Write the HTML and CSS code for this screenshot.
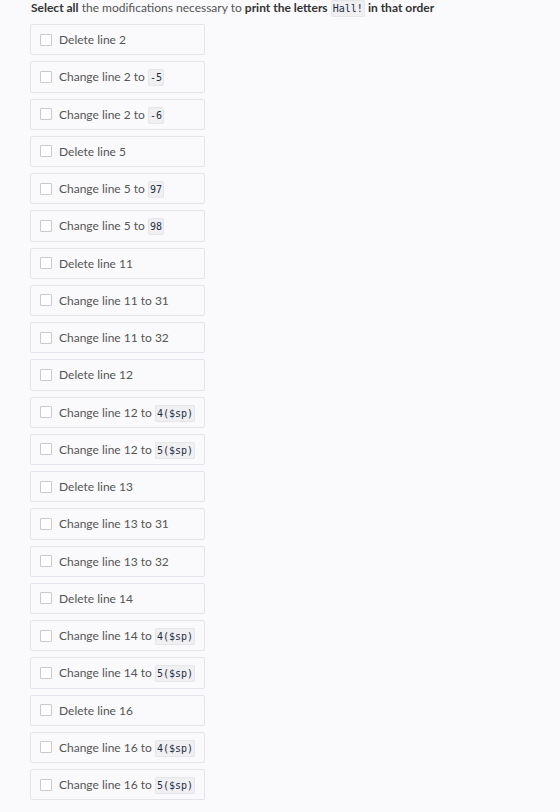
FILE: index.html
```html
<!DOCTYPE html>
<html>
<head>
<meta charset="utf-8">
<link rel="stylesheet" href="styles.css">
</head>
<body>
<div class="page">
  <p class="prompt"><b>Select all</b> the modifications necessary to <b>print the letters</b> <code>Hall!</code> <b>in that order</b></p>
  <ul class="options">
    <li class="option"><span class="check"></span><span class="label">Delete line 2</span></li>
    <li class="option"><span class="check"></span><span class="label">Change line 2 to <code>-5</code></span></li>
    <li class="option"><span class="check"></span><span class="label">Change line 2 to <code>-6</code></span></li>
    <li class="option"><span class="check"></span><span class="label">Delete line 5</span></li>
    <li class="option"><span class="check"></span><span class="label">Change line 5 to <code>97</code></span></li>
    <li class="option"><span class="check"></span><span class="label">Change line 5 to <code>98</code></span></li>
    <li class="option"><span class="check"></span><span class="label">Delete line 11</span></li>
    <li class="option"><span class="check"></span><span class="label">Change line 11 to 31</span></li>
    <li class="option"><span class="check"></span><span class="label">Change line 11 to 32</span></li>
    <li class="option"><span class="check"></span><span class="label">Delete line 12</span></li>
    <li class="option"><span class="check"></span><span class="label">Change line 12 to <code>4($sp)</code></span></li>
    <li class="option"><span class="check"></span><span class="label">Change line 12 to <code>5($sp)</code></span></li>
    <li class="option"><span class="check"></span><span class="label">Delete line 13</span></li>
    <li class="option"><span class="check"></span><span class="label">Change line 13 to 31</span></li>
    <li class="option"><span class="check"></span><span class="label">Change line 13 to 32</span></li>
    <li class="option"><span class="check"></span><span class="label">Delete line 14</span></li>
    <li class="option"><span class="check"></span><span class="label">Change line 14 to <code>4($sp)</code></span></li>
    <li class="option"><span class="check"></span><span class="label">Change line 14 to <code>5($sp)</code></span></li>
    <li class="option"><span class="check"></span><span class="label">Delete line 16</span></li>
    <li class="option"><span class="check"></span><span class="label">Change line 16 to <code>4($sp)</code></span></li>
    <li class="option"><span class="check"></span><span class="label">Change line 16 to <code>5($sp)</code></span></li>
  </ul>
</div>
</body>
</html>
```
FILE: styles.css
```css
html, body {
  margin: 0;
  padding: 0;
  background: #fafafc;
}
.page {
  padding: 0 30px;
  font-family: Lato, "Open Sans", sans-serif;
  font-size: 12px;
  color: #555;
}
.prompt {
  margin: 0;
  height: 24px;
  line-height: 16px;
  padding-left: 1px;
}
.prompt b {
  color: #333;
  font-weight: 700;
}
code {
  font-family: "DejaVu Sans Mono", monospace;
  font-size: 10px;
  color: #1f2f45;
  background: #f0f0f3;
  border: 1px solid #e6e6ea;
  border-radius: 2px;
  padding: 2px 1px;
}
.options {
  list-style: none;
  margin: 0;
  padding: 0;
  display: flex;
  flex-direction: column;
  gap: 6px;
}
.option {
  box-sizing: border-box;
  width: 175px;
  height: 31.25px;
  border: 1px solid #e4e4ea;
  border-radius: 2px;
  background: #fafafc;
  display: flex;
  align-items: center;
  padding-left: 9px;
}
.check {
  box-sizing: border-box;
  width: 12px;
  height: 12px;
  border: 1px solid #c9c9d0;
  border-radius: 1px;
  background: #fff;
  flex: none;
  margin-right: 7px;
}
.label {
  color: #555;
  white-space: nowrap;
}
```
